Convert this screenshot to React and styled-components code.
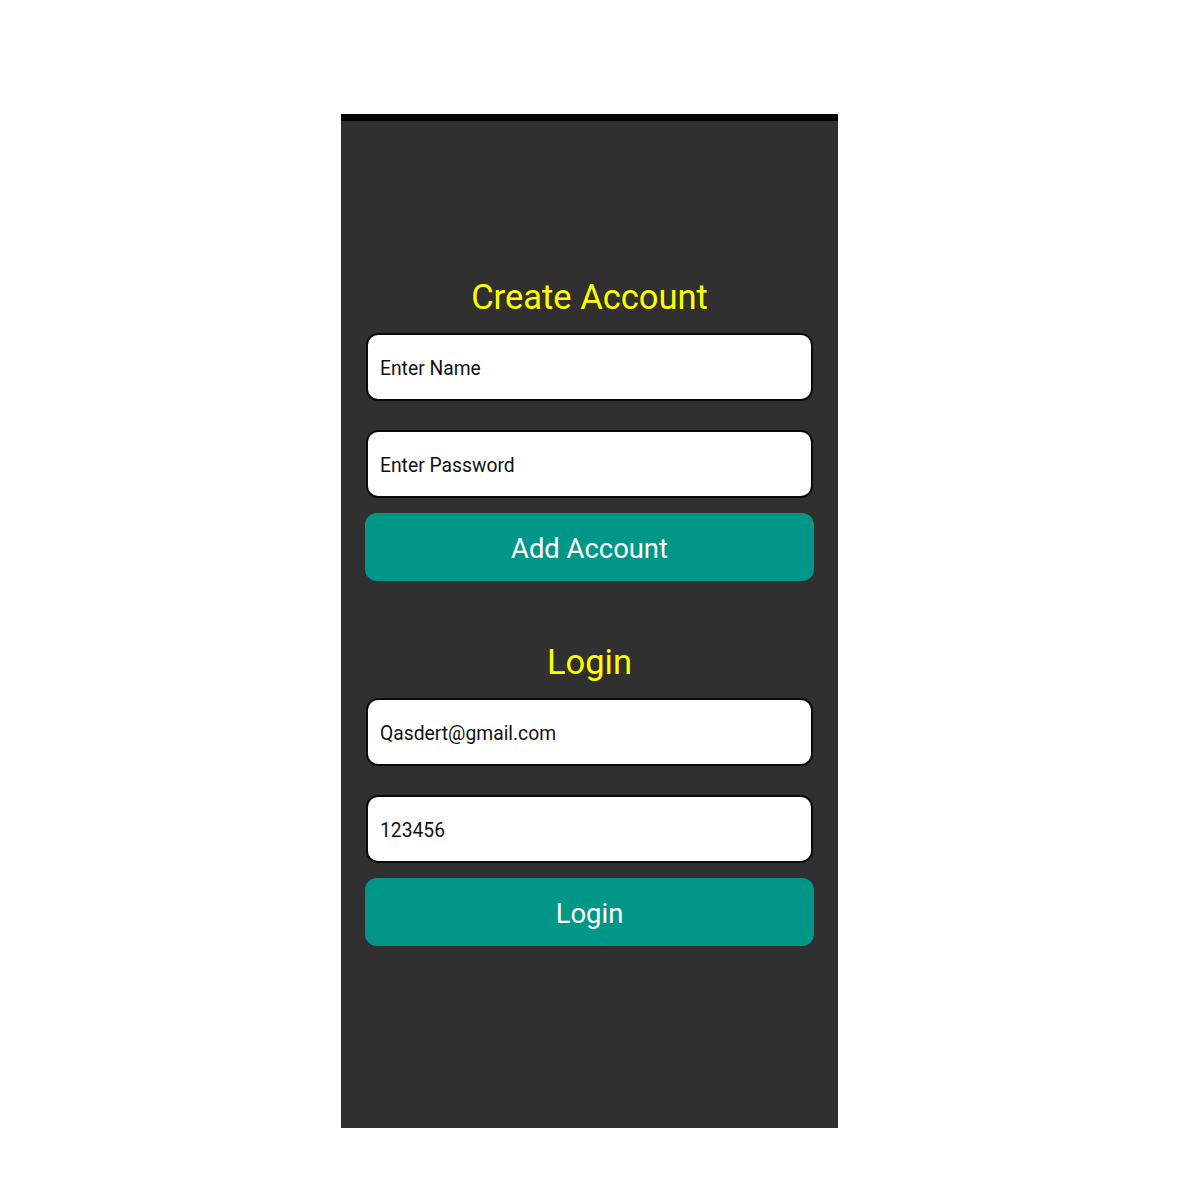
import React from "react";
import styled, { createGlobalStyle } from "styled-components";

const Global = createGlobalStyle`
  html, body { margin: 0; padding: 0; background: #ffffff; }
  body { font-family: Roboto, "Noto Sans", sans-serif; }
`;

const Page = styled.div`
  padding: 114px 0 72px 341px;
`;

const Phone = styled.div`
  width: 497px;
  height: 1014px;
  background: #303030;
  display: flex;
  flex-direction: column;
`;

const StatusBar = styled.div`
  height: 7px;
  background: #000000;
  flex-shrink: 0;
`;

const Content = styled.div`
  display: flex;
  flex-direction: column;
  padding: 156px 25px 0 25px;
`;

const Section = styled.section`
  display: flex;
  flex-direction: column;
  margin-top: ${(p) => (p.$first ? "0" : "61px")};
`;

const Title = styled.h2`
  margin: 0 0 16px 0;
  font-family: Roboto, sans-serif;
  font-weight: 400;
  font-size: 34.5px;
  line-height: 40px;
  text-align: center;
  color: #ffff00;
`;

const Field = styled.input`
  box-sizing: border-box;
  width: 447px;
  height: 68px;
  margin: 0 0 ${(p) => p.$gap}px 0;
  padding: 2px 12px 0 12px;
  border: 2px solid #0a0a0a;
  border-radius: 12px;
  background: #ffffff;
  color: #111111;
  font-family: Roboto, sans-serif;
  font-size: 19.3px;
  outline: none;
`;

const Button = styled.button`
  box-sizing: border-box;
  width: 449px;
  height: 68px;
  margin: 0 0 0 -1px;
  padding: 4px 0 0 0;
  border: none;
  border-radius: 12px;
  background: #009688;
  color: #ffffff;
  font-family: Roboto, sans-serif;
  font-size: 27.4px;
  font-weight: 400;
  cursor: pointer;
`;

function FormSection({ title, first, fields, action }) {
  return (
    <Section $first={first}>
      <Title>{title}</Title>
      <Field $gap={29} readOnly value={fields[0]} />
      <Field $gap={15} readOnly value={fields[1]} />
      <Button>{action}</Button>
    </Section>
  );
}

export default function App() {
  return (
    <>
      <Global />
      <Page>
        <Phone>
          <StatusBar />
          <Content>
            <FormSection
              first
              title="Create Account"
              fields={["Enter Name", "Enter Password"]}
              action="Add Account"
            />
            <FormSection
              title="Login"
              fields={["Qasdert@gmail.com", "123456"]}
              action="Login"
            />
          </Content>
        </Phone>
      </Page>
    </>
  );
}
